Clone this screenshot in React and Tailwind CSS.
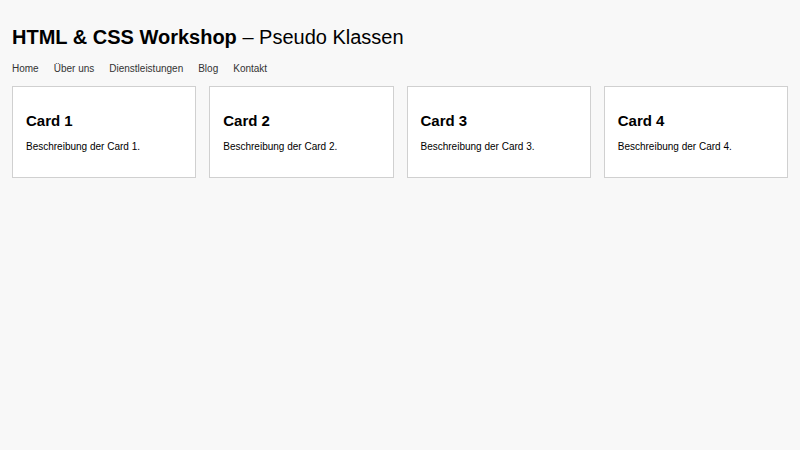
export default function App() {
  return (
    <div className="min-h-[450px] bg-[#f8f8f8] px-[12px] pt-[25px] text-black" style={{ fontFamily: '"Liberation Sans", Arial, sans-serif' }}>
      <h1 className="text-[20px] leading-[24px]">
        <span className="font-bold">HTML &amp; CSS Workshop</span> – Pseudo Klassen
      </h1>
      <nav className="mt-[14px] flex gap-[15px] text-[10px] leading-[12px] text-[#333]">
        <span>Home</span>
        <span>Über uns</span>
        <span>Dienstleistungen</span>
        <span>Blog</span>
        <span>Kontakt</span>
      </nav>
      <div className="mt-[11px] grid grid-cols-4 gap-[13px]">
        {[1, 2, 3, 4].map((n) => (
          <div key={n} className="h-[92px] border border-[#d0d0d0] bg-white px-[13px] pt-[25px]">
            <h2 className="text-[15px] font-bold leading-[18px]">Card {n}</h2>
            <p className="mt-[11px] text-[10px] leading-[12px]">Beschreibung der Card {n}.</p>
          </div>
        ))}
      </div>
    </div>
  );
}
